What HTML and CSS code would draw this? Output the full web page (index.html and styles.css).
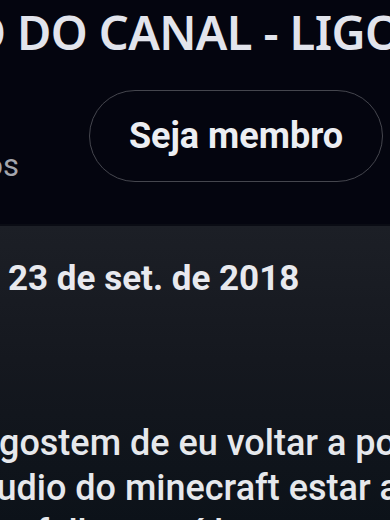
FILE: index.html
```html
<!DOCTYPE html>
<html lang="pt-BR">
<head>
    <meta charset="UTF-8">
    <meta name="viewport" content="width=device-width, initial-scale=1.0">
    <title>Canal - Sobre</title>
    <link rel="stylesheet" href="styles.css">
</head>
<body>
    <div class="channel-header">
        <h1 class="title">O DO CANAL - LIGOU O MINECRAFT</h1>

        <div class="meta-row">
            <div class="subs">
                <span>1,2 mil inscritos</span>
            </div>
            <button class="join-button">Seja membro</button>
        </div>
    </div>

    <div class="about">
        <div class="date">23 de set. de 2018</div>

        <div class="description">
            <div class="line line-first">gostem de eu voltar a postar</div>
            <div class="line line-second">áudio do minecraft estar assim</div>
            <div class="line line-third">a falha no vídeo</div>
        </div>
    </div>
</body>
</html>
```

FILE: styles.css
```css
body {
    margin: 0;
    padding: 0;
    width: 390px;
    height: 520px;
    overflow: hidden;
    background-color: #04050f;
    font-family: Roboto, 'Liberation Sans', sans-serif;
    color: #eceef2;
}

.channel-header {
    height: 224px;
    background-color: #04050f;
    overflow: hidden;
}

.title {
    margin: 0 0 0 -31px;
    padding-top: 4px;
    font-family: 'Noto Sans', 'Open Sans', sans-serif;
    font-size: 47px;
    font-weight: 600;
    letter-spacing: -0.6px;
    line-height: 56px;
    color: #e2e4ec;
    white-space: nowrap;
}

.meta-row {
    display: flex;
    align-items: center;
    margin-top: 30px;
}

.subs {
    width: 19px;
    display: flex;
    justify-content: flex-end;
    overflow: hidden;
    align-self: flex-end;
    margin-bottom: -2px;
    font-size: 31px;
    color: #a4a6ad;
    white-space: nowrap;
}

.join-button {
    margin-left: 70px;
    width: 294px;
    height: 92px;
    border: 1.5px solid #45464e;
    border-radius: 46px;
    background-color: transparent;
    color: #eceef2;
    font-family: Roboto, 'Liberation Sans', sans-serif;
    font-size: 36px;
    font-weight: 700;
    padding: 0;
}

.about {
    height: 296px;
    background: linear-gradient(180deg, #1c1f26 0%, #15181f 45%, #0c1219 100%);
    border-top: 2px solid #0a0c14;
    overflow: hidden;
}

.date {
    padding: 31px 0 0 8px;
    font-size: 35px;
    font-weight: 700;
    line-height: 44px;
    color: #e8e9ee;
}

.description {
    margin-top: 120px;
    font-size: 36px;
    font-weight: 500;
    line-height: 45px;
    color: #e6e8ec;
}

.line {
    white-space: nowrap;
}

.line-first {
    margin-left: -1px;
}

.line-second {
    margin-left: -23px;
}

.line-third {
    margin-left: 8px;
}
```
